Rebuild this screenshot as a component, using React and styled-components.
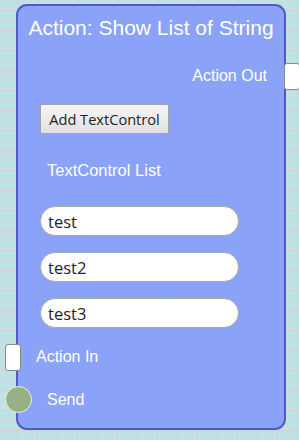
import React from 'react';
import styled, { createGlobalStyle } from 'styled-components';

const GlobalStyle = createGlobalStyle`
  html, body {
    margin: 0;
    padding: 0;
  }
  body {
    width: 299px;
    height: 440px;
    overflow: hidden;
    background-color: #c2e1e5;
    background-image:
      linear-gradient(to right, #d3d0d3 1px, transparent 1px),
      linear-gradient(to bottom, #d3d0d3 1px, transparent 1px);
    background-size: 20px 20px;
    background-position: 17px 10px;
    font-family: 'Liberation Sans', Arial, sans-serif;
  }
`;

const Canvas = styled.div`
  padding: 4px 0 0 16px;
`;

const Node = styled.div`
  box-sizing: border-box;
  width: 270px;
  height: 426px;
  border: 2px solid #5159c9;
  border-radius: 11px;
  background: rgba(132, 156, 251, 0.9);
  display: flex;
  flex-direction: column;
`;

const Title = styled.div`
  margin-top: 10px;
  font-size: 21px;
  line-height: 24px;
  color: #fff;
  text-align: center;
  white-space: nowrap;
`;

const PortRow = styled.div`
  position: relative;
  display: flex;
  align-items: center;
  justify-content: ${(p) => (p.$right ? 'flex-end' : 'flex-start')};
  height: ${(p) => p.$h || 28}px;
  margin-top: ${(p) => p.$mt}px;
  padding: ${(p) => (p.$right ? '0 17px 0 0' : `0 0 0 ${p.$pl}px`)};
`;

const Label = styled.span`
  font-size: 16px;
  color: #fff;
  white-space: nowrap;
`;

const ActionPort = styled.div`
  position: absolute;
  top: 50%;
  ${(p) => (p.$right ? 'right: -16px;' : 'left: -13px;')}
  width: 16px;
  height: 27px;
  margin-top: -13px;
  box-sizing: border-box;
  background: #fff;
  border: 1px solid #8a8a8a;
  border-radius: 3px;
`;

const DataPort = styled.div`
  position: absolute;
  top: 50%;
  left: -13px;
  width: 27px;
  height: 27px;
  margin-top: -14px;
  box-sizing: border-box;
  border-radius: 50%;
  background: #97b186;
  border: 1px solid #eef2ea;
`;

const AddButton = styled.button`
  align-self: flex-start;
  margin: 18px 0 0 22px;
  box-sizing: border-box;
  width: 129px;
  height: 30px;
  padding: 0;
  font-family: 'Open Sans', 'Noto Sans', sans-serif;
  font-size: 14.6px;
  color: #222;
  background: linear-gradient(#f6f6f6, #e1e1e1);
  border: 1px solid #a3a3a3;
  border-radius: 2px;
`;

const ListLabel = styled.div`
  margin: 26px 0 0 29px;
  font-size: 16.5px;
  line-height: 20px;
  color: #fff;
`;

const List = styled.div`
  display: flex;
  flex-direction: column;
  gap: 16px;
  margin: 26px 0 0 22px;
`;

const TextInput = styled.input`
  box-sizing: border-box;
  width: 199px;
  height: 30px;
  padding: 0 0 0 7px;
  font-family: 'Open Sans', 'Noto Sans', sans-serif;
  font-size: 16.5px;
  color: #1e1e2a;
  background: #fff;
  border: 1px solid #a8a8a8;
  border-radius: 15px;
  outline: none;
`;

const items = ['test', 'test2', 'test3'];

export default function App() {
  return (
    <>
      <GlobalStyle />
      <Canvas>
        <Node>
          <Title>Action: Show List of String</Title>
          <PortRow $right $mt={26} $h={20}>
            <Label>Action Out</Label>
            <ActionPort $right />
          </PortRow>
          <AddButton>Add TextControl</AddButton>
          <ListLabel>TextControl List</ListLabel>
          <List>
            {items.map((v) => (
              <TextInput key={v} defaultValue={v} />
            ))}
          </List>
          <PortRow $mt={15} $pl={18}>
            <ActionPort />
            <Label>Action In</Label>
          </PortRow>
          <PortRow $mt={15} $pl={29}>
            <DataPort />
            <Label>Send</Label>
          </PortRow>
        </Node>
      </Canvas>
    </>
  );
}
